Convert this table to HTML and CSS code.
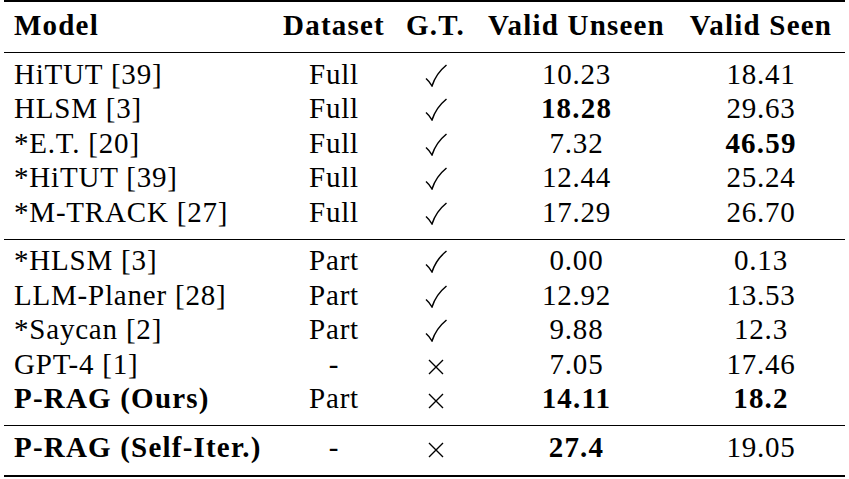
FILE: index.html
```html
<!DOCTYPE html>
<html lang="en">

<head>
    <meta charset="UTF-8">
    <meta name="viewport" content="width=device-width, initial-scale=1.0">
    <title>results</title>
    <link rel="stylesheet" href="styles.css">
</head>

<body>
    <table class="results">
        <colgroup>
            <col class="c-model">
            <col class="c-data">
            <col class="c-gt">
            <col class="c-unseen">
            <col class="c-seen">
        </colgroup>
        <thead>
            <tr>
                <th class="left">Model</th>
                <th>Dataset</th>
                <th>G.T.</th>
                <th>Valid Unseen</th>
                <th>Valid Seen</th>
            </tr>
        </thead>
        <tbody>
            <tr>
                <td class="left">HiTUT [39]</td>
                <td>Full</td>
                <td><svg class="check" viewBox="0 0 22 23"><path d="M1 14.5 Q4.5 17.5 7 22 Q11 9.5 21.5 1"/></svg></td>
                <td>10.23</td>
                <td>18.41</td>
            </tr>
            <tr>
                <td class="left">HLSM [3]</td>
                <td>Full</td>
                <td><svg class="check" viewBox="0 0 22 23"><path d="M1 14.5 Q4.5 17.5 7 22 Q11 9.5 21.5 1"/></svg></td>
                <td><b>18.28</b></td>
                <td>29.63</td>
            </tr>
            <tr>
                <td class="left">*E.T. [20]</td>
                <td>Full</td>
                <td><svg class="check" viewBox="0 0 22 23"><path d="M1 14.5 Q4.5 17.5 7 22 Q11 9.5 21.5 1"/></svg></td>
                <td>7.32</td>
                <td><b>46.59</b></td>
            </tr>
            <tr>
                <td class="left">*HiTUT [39]</td>
                <td>Full</td>
                <td><svg class="check" viewBox="0 0 22 23"><path d="M1 14.5 Q4.5 17.5 7 22 Q11 9.5 21.5 1"/></svg></td>
                <td>12.44</td>
                <td>25.24</td>
            </tr>
            <tr>
                <td class="left">*M-TRACK [27]</td>
                <td>Full</td>
                <td><svg class="check" viewBox="0 0 22 23"><path d="M1 14.5 Q4.5 17.5 7 22 Q11 9.5 21.5 1"/></svg></td>
                <td>17.29</td>
                <td>26.70</td>
            </tr>
        </tbody>
        <tbody>
            <tr>
                <td class="left">*HLSM [3]</td>
                <td>Part</td>
                <td><svg class="check" viewBox="0 0 22 23"><path d="M1 14.5 Q4.5 17.5 7 22 Q11 9.5 21.5 1"/></svg></td>
                <td>0.00</td>
                <td>0.13</td>
            </tr>
            <tr>
                <td class="left">LLM-Planer [28]</td>
                <td>Part</td>
                <td><svg class="check" viewBox="0 0 22 23"><path d="M1 14.5 Q4.5 17.5 7 22 Q11 9.5 21.5 1"/></svg></td>
                <td>12.92</td>
                <td>13.53</td>
            </tr>
            <tr>
                <td class="left">*Saycan [2]</td>
                <td>Part</td>
                <td><svg class="check" viewBox="0 0 22 23"><path d="M1 14.5 Q4.5 17.5 7 22 Q11 9.5 21.5 1"/></svg></td>
                <td>9.88</td>
                <td>12.3</td>
            </tr>
            <tr>
                <td class="left">GPT-4 [1]</td>
                <td>-</td>
                <td><svg class="cross" viewBox="0 0 16 16"><path d="M1 1 L15 15 M15 1 L1 15"/></svg></td>
                <td>7.05</td>
                <td>17.46</td>
            </tr>
            <tr>
                <td class="left"><b>P-RAG (Ours)</b></td>
                <td>Part</td>
                <td><svg class="cross" viewBox="0 0 16 16"><path d="M1 1 L15 15 M15 1 L1 15"/></svg></td>
                <td><b>14.11</b></td>
                <td><b>18.2</b></td>
            </tr>
        </tbody>
        <tbody>
            <tr>
                <td class="left"><b>P-RAG (Self-Iter.)</b></td>
                <td>-</td>
                <td><svg class="cross" viewBox="0 0 16 16"><path d="M1 1 L15 15 M15 1 L1 15"/></svg></td>
                <td><b>27.4</b></td>
                <td>19.05</td>
            </tr>
        </tbody>
    </table>
</body>

</html>
```

FILE: styles.css
```css
body {
    margin: 0;
    background-color: white;
    color: black;
    font-family: 'Liberation Serif', 'Times New Roman', serif;
}

.results {
    margin-left: 4px;
    width: 841px;
    table-layout: fixed;
    border-collapse: collapse;
    font-size: 29px;
    line-height: 34.4px;
    letter-spacing: 0.8px;
}

.results b,
.results th {
    letter-spacing: 1.2px;
}

.c-model { width: 269px; }
.c-data { width: 122px; }
.c-gt { width: 81px; }
.c-unseen { width: 201px; }
.c-seen { width: 168px; }

.results th,
.results td {
    padding: 0 10px;
    text-align: center;
    white-space: nowrap;
}

.results .left {
    text-align: left;
}

.results thead tr {
    border-top: 2.5px solid black;
}

.results thead th {
    padding-top: 5.5px;
    padding-bottom: 10.5px;
}

.results tbody {
    border-top: 1.3px solid black;
}

.results tbody:last-child {
    border-bottom: 2.5px solid black;
}

.results tbody tr:first-child td {
    padding-top: 3.5px;
}

.results tbody tr:last-child td {
    padding-bottom: 10px;
}

.results tbody:last-child tr:last-child td {
    padding-bottom: 11px;
}

.check {
    width: 22px;
    height: 23px;
    vertical-align: -3px;
    fill: none;
    stroke: black;
    stroke-width: 1.5;
}

.cross {
    width: 16px;
    height: 16px;
    vertical-align: -1px;
    fill: none;
    stroke: black;
    stroke-width: 1.4;
}
```
